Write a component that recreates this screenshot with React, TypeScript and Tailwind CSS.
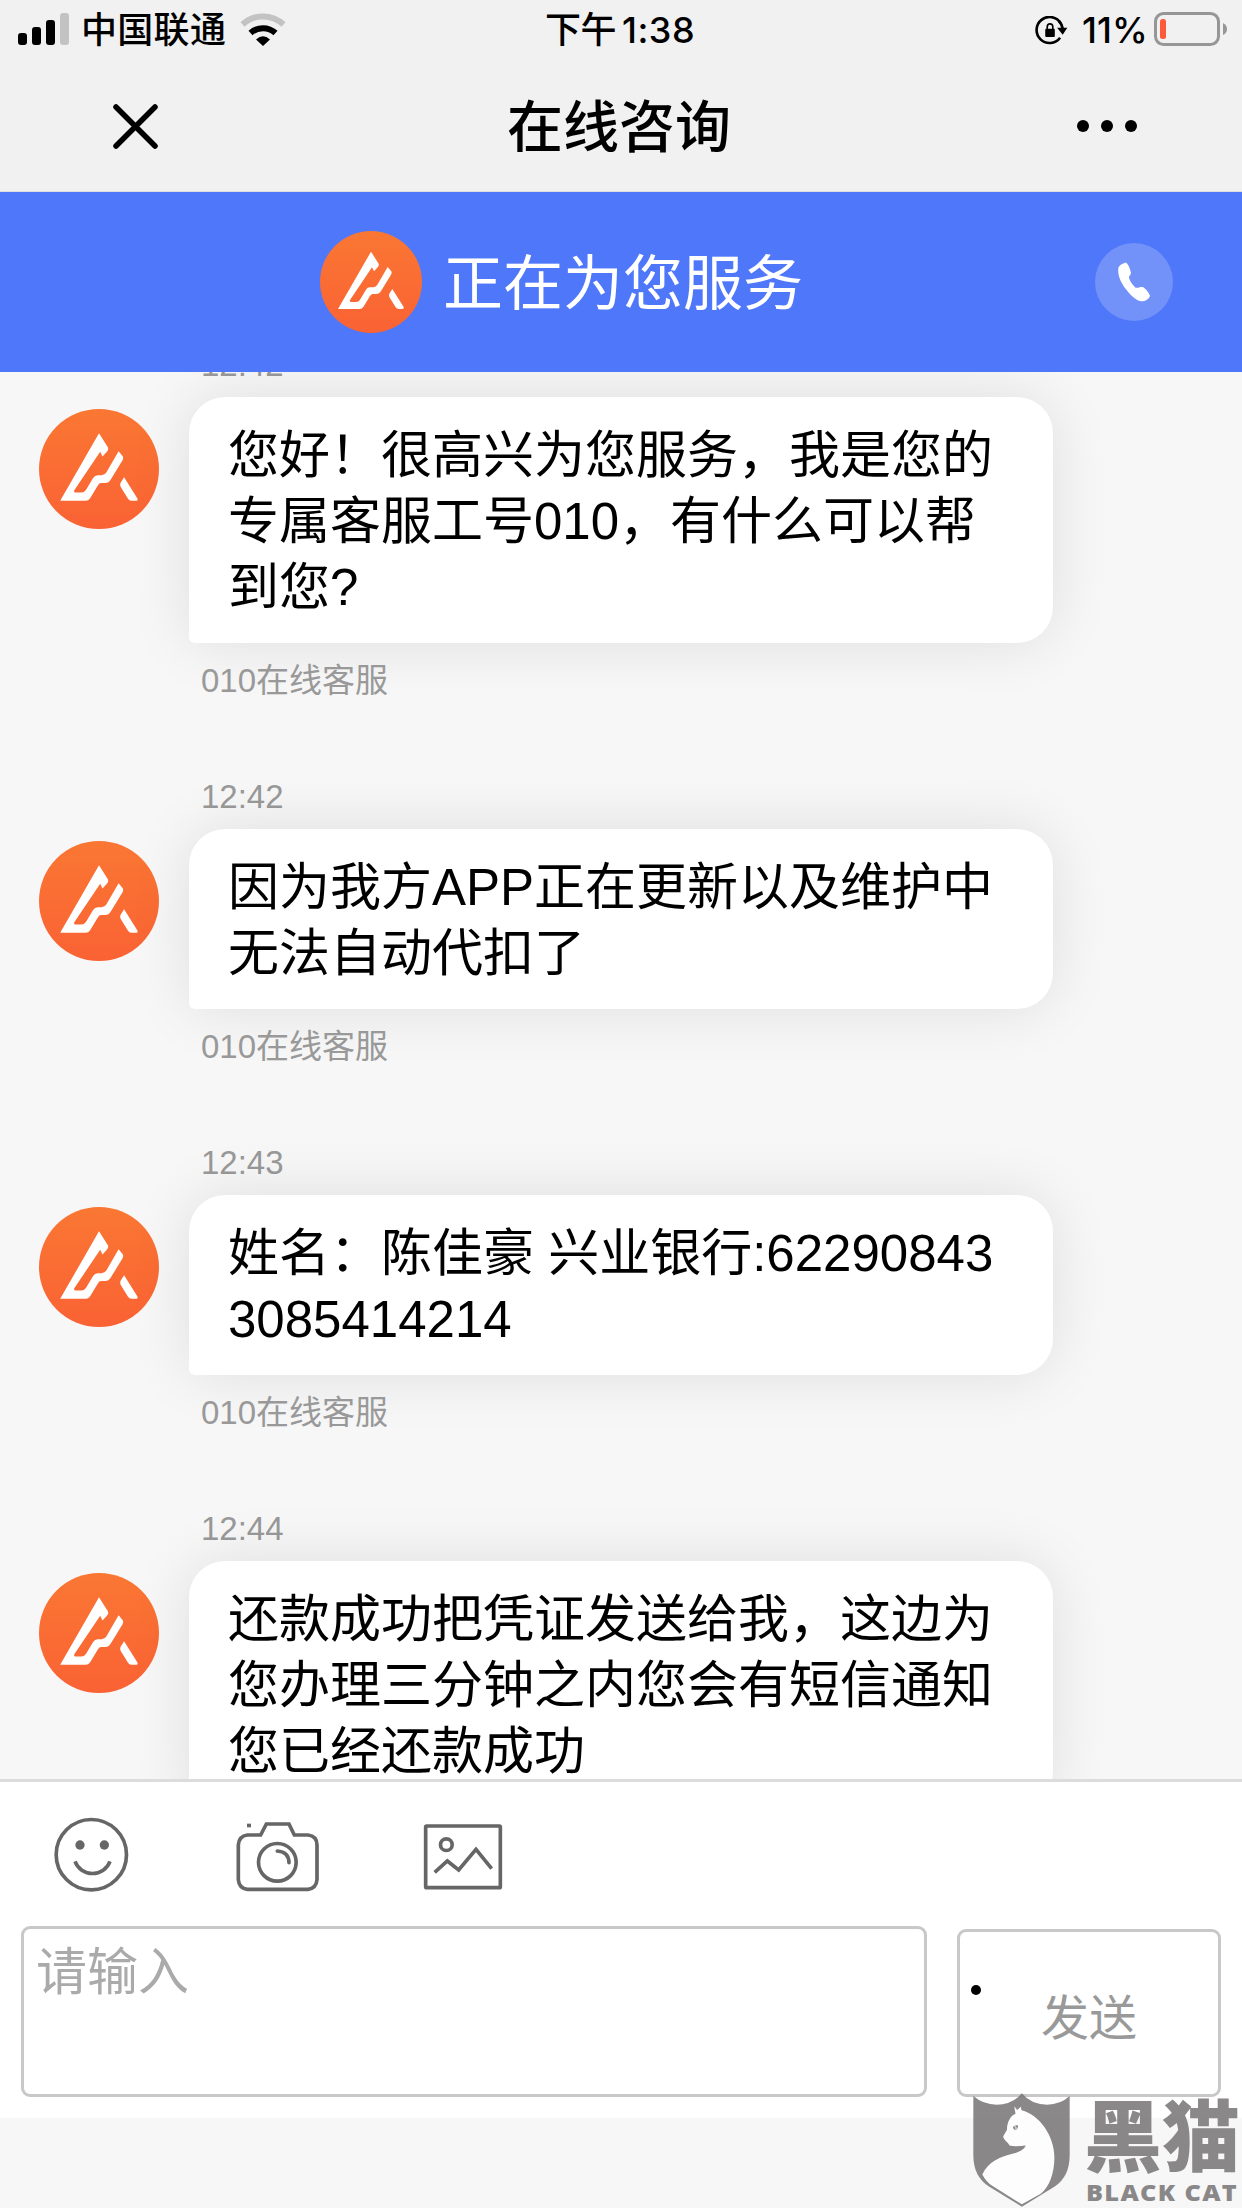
import { useState } from "react";

type Message = {
  id: number;
  time: string;
  lines: string[];
  sender: string;
};

const initialMessages: Message[] = [
  {
    id: 1,
    time: "12:42",
    lines: ["您好！很高兴为您服务，我是您的", "专属客服工号010，有什么可以帮", "到您?"],
    sender: "010在线客服",
  },
  {
    id: 2,
    time: "12:42",
    lines: ["因为我方APP正在更新以及维护中", "无法自动代扣了"],
    sender: "010在线客服",
  },
  {
    id: 3,
    time: "12:43",
    lines: ["姓名：陈佳豪 兴业银行:62290843", "3085414214"],
    sender: "010在线客服",
  },
  {
    id: 4,
    time: "12:44",
    lines: ["还款成功把凭证发送给我，这边为", "您办理三分钟之内您会有短信通知", "您已经还款成功"],
    sender: "010在线客服",
  },
];

// round orange brand mark, used in the banner and next to every message
const Logo = ({ className }: { className: string }) => (
  <svg viewBox="60 123 306 306" className={className}>
    <defs>
      <linearGradient id="brand" x1="0" y1="0" x2="0" y2="1">
        <stop offset="0" stopColor="#fa7733" />
        <stop offset="1" stopColor="#fa6234" />
      </linearGradient>
    </defs>
    <circle cx="213" cy="276" r="153" fill="url(#brand)" />
    <path
      d="M213 185L236 221Q238 226 233 232L222 244L216 232L150 330Q148 336 154 336H168Q176 336 180 329L198 299Q202 292 210 292H220Q228 291 232 284L263 231L274 244Q276 249 273 254L243 303Q238 312 228 312H219Q213 312 210 318L190 351Q186 357 179 357H114Z"
      fill="#fff"
    />
    <path
      d="M277 297L311 351Q313 357 307 357H296Q290 357 287 352L268 321Q266 316 268 311Z"
      fill="#fff"
    />
  </svg>
);

const StatusBar = () => (
  <div className="flex h-[60px] items-center font-['Inter','Noto_Sans_CJK_SC',sans-serif] text-[36px] leading-[60px] text-black">
    <div className="flex w-[545px] items-center pl-[18px]">
      <svg viewBox="0 0 51 33" className="-mt-[2px] h-[33px] w-[51px]">
        <rect x="0" y="20" width="9" height="12" rx="3" />
        <rect x="14" y="14" width="9" height="18" rx="3" />
        <rect x="28" y="7" width="9" height="25" rx="3" />
        <rect x="42" y="0" width="9" height="32" rx="3" fill="#c3c3c3" />
      </svg>
      <span className="ml-[12px] font-medium tracking-[0.3px]">中国联通</span>
      <svg viewBox="241 12 46 34" className="-mt-[2px] ml-[14px] h-[34px] w-[46px]" fill="none">
        <path d="M243.500 24.500A30 30 0 0 1 284.500 24.500" stroke="#c3c3c3" strokeWidth="6" />
        <path d="M251.500 33A18.500 18.500 0 0 1 276.500 33" stroke="#000" strokeWidth="6" />
        <path d="M257 39.500Q264 33 271 39.500L264 46Z" fill="#000" />
      </svg>
    </div>
    <div className="flex w-[490px] items-center font-medium">
      <span className="tracking-[-0.5px]">下午</span>
      <span className="ml-[6px] tracking-[0.5px]">1:38</span>
    </div>
    <svg viewBox="44 44 98 88" className="h-[29px] w-[33px]" fill="none">
      <path d="M121 66A39.500 39.500 0 1 0 119 110" stroke="#000" strokeWidth="8" />
      <path d="M110 80H141L127 101Z" fill="#000" />
      <path d="M116 60Q124 68 127 82" stroke="#000" strokeWidth="8" />
      <rect x="74" y="83" width="29" height="25" rx="3" fill="#000" />
      <path d="M80 84V77Q80 68 88.500 68T97 77V84" stroke="#000" strokeWidth="5" />
    </svg>
    <span className="ml-[14px] w-[72px] font-medium tracking-[0px]">11%</span>
    <svg viewBox="0 0 74 34" className="-mt-[2px] h-[34px] w-[74px]">
      <rect x="1.500" y="1.500" width="63" height="31" rx="8" fill="none" stroke="#969696" strokeWidth="3" />
      <rect x="6" y="7" width="6" height="20" rx="2.500" fill="#fc5b3a" />
      <path d="M69 11Q73 13 73 17T69 23Z" fill="#969696" />
    </svg>
  </div>
);

const TitleBar = () => (
  <div className="flex h-[131px] items-center pt-[1px] pl-[113px]">
    <button className="flex w-[394px] items-center">
      <svg viewBox="0 0 45 45" className="h-[45px] w-[45px]">
        <path d="M3 3L42 42M42 3L3 42" stroke="#000" strokeWidth="5.500" strokeLinecap="round" />
      </svg>
    </button>
    <h1 className="w-[570px] pt-[4px] text-[56px] leading-[80px] font-medium text-black">在线咨询</h1>
    <button className="flex gap-3">
      <span className="h-3 w-3 rounded-full bg-black" />
      <span className="h-3 w-3 rounded-full bg-black" />
      <span className="h-3 w-3 rounded-full bg-black" />
    </button>
  </div>
);

const ServiceBanner = () => (
  <div className="flex h-[180px] shrink-0 items-center bg-[#4f77f9] pl-[320px]">
    <Logo className="h-[102px] w-[102px]" />
    <p className="ml-[21px] w-[652px] pt-[5px] text-[60px] leading-[84px] text-white">正在为您服务</p>
    <button className="h-[78px] w-[78px] rounded-full bg-[#7292f9]">
      <svg viewBox="225 159 234 234" className="h-full w-full">
        <path
          d="M295 233C299 225 309 218 319 218C327 226 331 238 333 250C331 257 326 259 327 264C331 276 339 287 347 293C354 294 360 290 368 291C376 295 386 306 390 317C388 326 376 334 365 334C350 334 332 317 318 298C303 278 292 256 295 233Z"
          fill="#fff"
        />
      </svg>
    </button>
  </div>
);

const MessageRow = ({ message }: { message: Message }) => (
  <article className="mb-[82px]">
    <p className="mb-[15px] pl-[201px] text-[33px] leading-[34px] text-[#999]">{message.time}</p>
    <div className="flex items-start pl-[39px]">
      <Logo className="mt-3 h-[120px] w-[120px]" />
      <div className="ml-[30px] w-[864px] rounded-[36px] rounded-bl-[6px] bg-white pt-[26px] pb-[22px] pl-[39px] shadow-[0_0_60px_rgba(0,0,0,0.1)]">
        {message.lines.map((line) => (
          <p key={line} className="text-[51px] leading-[66px] whitespace-nowrap text-black">
            {line}
          </p>
        ))}
      </div>
    </div>
    <p className="mt-[21px] pl-[201px] text-[33px] leading-[34px] text-[#999]">{message.sender}</p>
  </article>
);

const Composer = () => {
  const [text, setText] = useState("");

  return (
    <div className="h-[339px] shrink-0 border-t-[3px] border-[#dcdcdc] bg-white">
      {/* emoji, camera, picture */}
      <div className="flex h-[144px] items-start pl-[54px] text-[#666]">
        <svg viewBox="102 83 225 225" className="mt-[35px] h-[75px] w-[75px]" fill="none" stroke="currentColor" strokeWidth="11">
          <circle cx="214" cy="196" r="105.500" />
          <circle cx="180" cy="167" r="14" fill="currentColor" stroke="none" />
          <circle cx="253" cy="167" r="14" fill="currentColor" stroke="none" />
          <path d="M165 216A56 56 0 0 0 270 216" />
        </svg>
        <svg viewBox="648 92 249 213" className="mt-[39px] ml-[107px] h-[71px] w-[83px]" fill="none" stroke="currentColor" strokeWidth="11">
          <rect x="681" y="100" width="12" height="11" fill="currentColor" stroke="none" />
          <path d="M682 134H722L739 101H807L823 134H864Q891 137 891 164V268Q889 294 864 297H682Q657 294 655 268V164Q657 137 682 134Z" />
          <circle cx="772" cy="216" r="56.500" />
          <path d="M772 182Q806 184 807 217" strokeLinecap="round" />
        </svg>
        <svg viewBox="1210 99 240 201" className="mt-[41px] ml-[104px] h-[67px] w-[80px]" fill="none" stroke="currentColor" strokeWidth="11">
          <rect x="1218" y="108" width="224" height="185" rx="3" />
          <circle cx="1280" cy="164" r="17.500" />
          <path d="M1245 247L1283 213L1317 240L1369 178L1416 236" />
        </svg>
      </div>
      <div className="flex items-start pl-[21px]">
        <textarea
          value={text}
          onChange={(e) => setText(e.target.value)}
          placeholder="请输入"
          className="block h-[171px] w-[906px] resize-none rounded-[9px] border-[3px] border-[#c8c8c8] bg-white px-[12px] py-[11px] text-[51px] leading-[66px] text-black outline-none placeholder:text-[#aaa]"
        />
        <button className="mt-[3px] ml-[30px] flex h-[168px] w-[264px] items-start rounded-[9px] border-[3px] border-[#c8c8c8] bg-white">
          <span className="mt-[53px] ml-[11px] h-[10px] w-[10px] rounded-full bg-black" />
          <span className="mt-[54px] ml-[60px] text-[48px] leading-[66px] text-[#999]">发送</span>
        </button>
      </div>
    </div>
  );
};

// complaint platform stamp that sits over the bottom right corner
const BlackCatStamp = () => (
  <div className="absolute right-0 bottom-0 flex h-[116px] w-[270px] text-[#777475] opacity-85">
    <svg viewBox="99 640 292 344" className="mt-[1px] ml-[1px] h-[115px] w-[97px] shrink-0">
      <path
        d="M100 648Q130 674 170 674Q218 674 246 640Q274 674 322 674Q362 674 390 648V826Q390 890 345 920L246 981L147 920Q100 890 100 826Z"
        fill="currentColor"
      />
      <path
        d="M223 679L232 690L243 680L245 691C300 704 344 770 344 832C344 882 328 922 303 942L246 974L158 919Q139 907 127 884C145 846 180 831 218 822C242 816 253 808 258 797C240 799 222 801 209 797C204 786 190 780 190 769L201 750C202 725 211 708 227 701Z"
        fill="#fff"
      />
      <path d="M219 741Q224 735 234 736Q236 744 229 750Q221 751 219 741Z" fill="currentColor" />
      <path d="M224 739Q232 742 228 749" stroke="#fff" strokeWidth="3" fill="none" />
    </svg>
    <div className="ml-[14px] w-[158px] whitespace-nowrap">
      <p className="mt-[9px] h-[76px] text-[78px] leading-[76px] font-black">黑猫</p>
      <p className="ml-[2px] origin-left scale-x-110 font-['Open_Sans','Inter',sans-serif] text-[23px] leading-[31px] font-extrabold tracking-[1.200px]">
        BLACK CAT
      </p>
    </div>
  </div>
);

const App = () => {
  const [messages] = useState<Message[]>(initialMessages);

  return (
    <main className="relative flex h-[2208px] w-[1242px] flex-col overflow-hidden bg-[#f7f7f7] font-['Liberation_Sans','Noto_Sans_CJK_SC',sans-serif]">
      <header className="h-[192px] shrink-0 border-b border-[#dedede] bg-[#f1f1f1]">
        <StatusBar />
        <TitleBar />
      </header>
      <ServiceBanner />

      {/* scrolled so the first timestamp is cut by the banner */}
      <section className="min-h-0 flex-1 overflow-hidden">
        <div className="-mt-[24px]">
          {messages.map((message) => (
            <MessageRow key={message.id} message={message} />
          ))}
        </div>
      </section>

      <Composer />
      <div className="h-[90px] shrink-0" />
      <BlackCatStamp />
    </main>
  );
};

export default App;
